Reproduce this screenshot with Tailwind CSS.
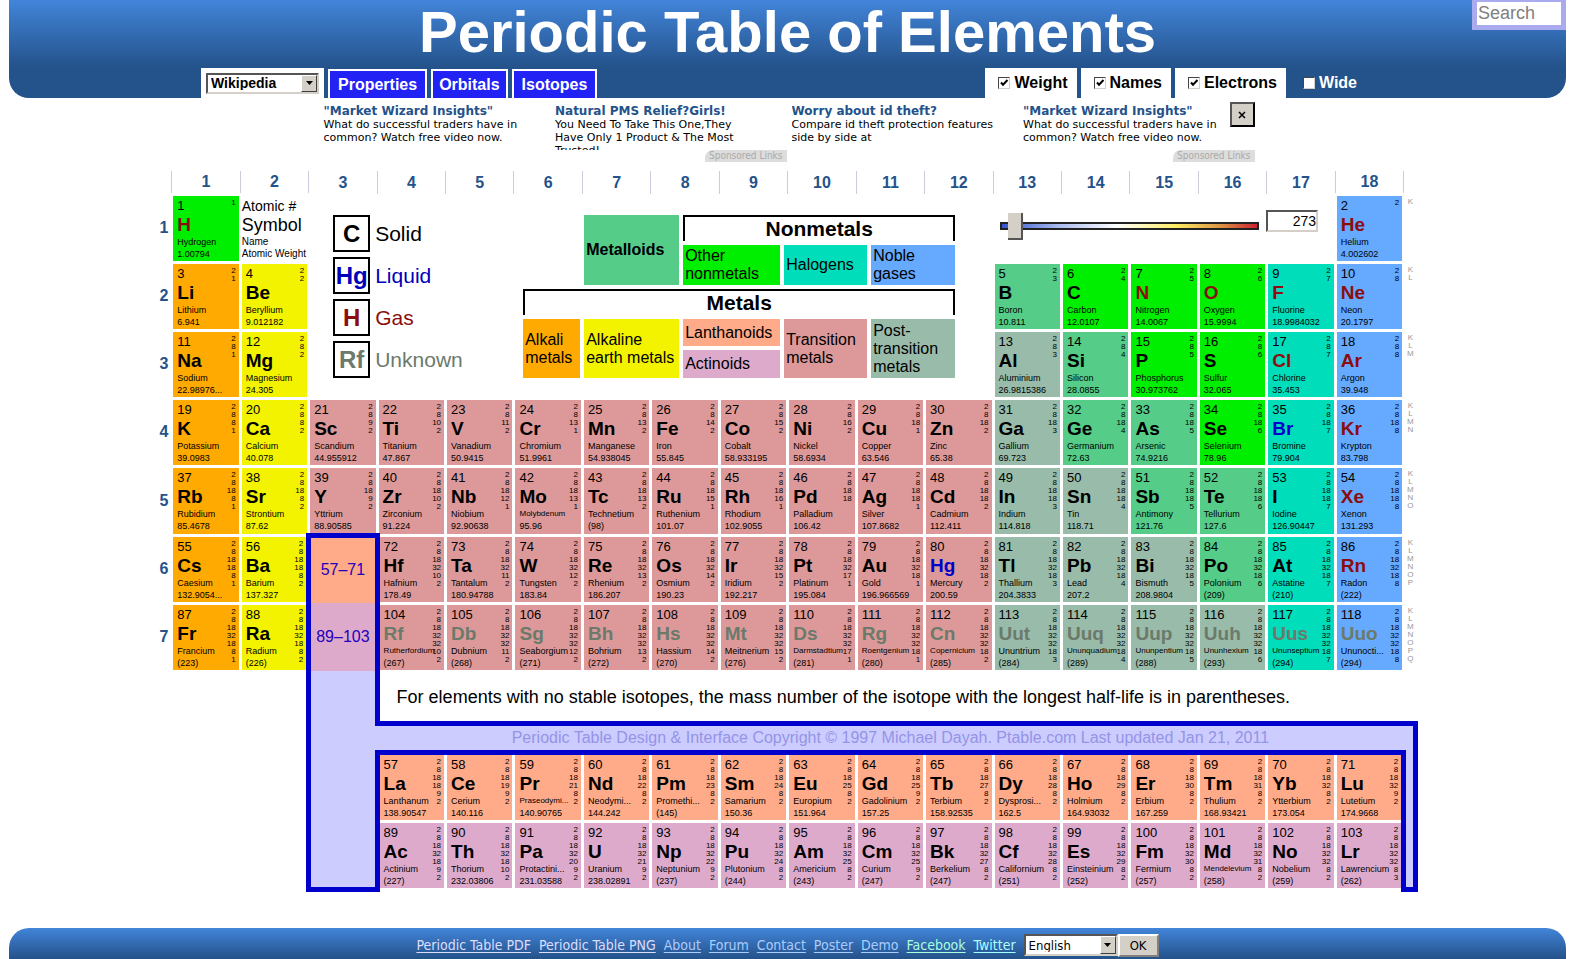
<!DOCTYPE html>
<html lang="en">
<head>
  <meta charset="UTF-8">
  <meta name="viewport" content="width=device-width, initial-scale=1.0">
  <title>Periodic Table of Elements</title>
  <script src="https://cdn.jsdelivr.net/npm/@tailwindcss/browser@4"></script>
</head>
<body class="bg-white text-black font-['Liberation_Sans',Arial,sans-serif]">

  <!-- Header -->
  <header class="relative ml-[9px] mr-3 flex h-[98px] flex-col justify-between rounded-b-[20px] bg-linear-to-b from-[#4285da] to-[#24528a] to-70%">
    <h1 class="pt-px text-center text-[58px] leading-[62px] font-bold whitespace-nowrap text-white">Periodic Table of Elements</h1>
    <input type="search" placeholder="Search" aria-label="Search" class="absolute top-0 right-0 h-[30px] w-[94px] border-[5px] border-t-2 border-[#aaaaee] bg-white px-px text-lg leading-none outline-none placeholder:text-[#808080]">

    <div class="flex items-end justify-between pl-48 pr-[200px] font-bold">
      <nav class="flex items-end gap-1">
        <div class="relative flex h-[30px] w-[123px] items-center bg-white px-[5px]">
          <select aria-label="Source" class="h-[21px] w-full appearance-none border-2 border-[#d4d0c8] border-t-[#555] border-l-[#555] bg-white pl-[3px] text-sm leading-none">
            <option>Wikipedia</option>
          </select>
          <span class="pointer-events-none absolute right-[7px] flex h-[17px] w-4 items-center justify-center border border-t-white border-l-white border-r-[#404040] border-b-[#404040] bg-[#d4d0c8]">
            <svg class="h-1 w-[7px]" viewBox="0 0 7 4"><path d="M0 0h7L3.5 4z"/></svg>
          </span>
        </div>
        <a href="#" class="h-[29px] border-2 border-b-0 border-white bg-[#2222f5] px-2 leading-[27px] text-white">Properties</a>
        <a href="#" class="h-[29px] border-2 border-b-0 border-white bg-[#2222f5] px-1.5 leading-[27px] text-white">Orbitals</a>
        <a href="#" class="h-[29px] border-2 border-b-0 border-white bg-[#2222f5] px-2 leading-[27px] text-white">Isotopes</a>
      </nav>
      <div class="flex items-end gap-1">
        <label class="flex h-[30px] items-center gap-1 bg-white pl-[13px] pr-[9px]">
          <span class="relative size-3">
            <input type="checkbox" checked class="peer block size-3 appearance-none border border-[#d4d0c8] border-t-[#444] border-l-[#444] bg-white">
            <svg class="pointer-events-none absolute inset-0 hidden size-3 peer-checked:block" viewBox="0 0 12 12"><path d="M3 5.5l2 2.2 4.5-4.7" fill="none" stroke="#000" stroke-width="2"/></svg>
          </span>
          Weight
        </label>
        <label class="flex h-[30px] items-center gap-1 bg-white pl-[13px] pr-[9px]">
          <span class="relative size-3">
            <input type="checkbox" checked class="peer block size-3 appearance-none border border-[#d4d0c8] border-t-[#444] border-l-[#444] bg-white">
            <svg class="pointer-events-none absolute inset-0 hidden size-3 peer-checked:block" viewBox="0 0 12 12"><path d="M3 5.5l2 2.2 4.5-4.7" fill="none" stroke="#000" stroke-width="2"/></svg>
          </span>
          Names
        </label>
        <label class="flex h-[30px] items-center gap-1 bg-white pl-[13px] pr-[9px]">
          <span class="relative size-3">
            <input type="checkbox" checked class="peer block size-3 appearance-none border border-[#d4d0c8] border-t-[#444] border-l-[#444] bg-white">
            <svg class="pointer-events-none absolute inset-0 hidden size-3 peer-checked:block" viewBox="0 0 12 12"><path d="M3 5.5l2 2.2 4.5-4.7" fill="none" stroke="#000" stroke-width="2"/></svg>
          </span>
          Electrons
        </label>
        <label class="flex h-[30px] items-center gap-1 pl-[13px] pr-[9px] text-white">
          <input type="checkbox" class="block size-3 appearance-none border border-[#d4d0c8] border-t-[#444] border-l-[#444] bg-white">
          Wide
        </label>
      </div>
    </div>
  </header>

  <!-- Sponsored links -->
  <aside class="relative mx-auto flex w-[59%] gap-[5px] font-['DejaVu_Sans',Verdana,sans-serif] text-[11px] leading-[13px] whitespace-nowrap">
    <div class="flex flex-1 flex-col">
      <div class="grid h-[52px] grid-cols-2 overflow-hidden pt-[7px]">
        <div>
          <a href="#" class="block text-xs leading-[13px] font-bold text-[#24528a]">"Market Wizard Insights"</a>
          <p>What do successful traders have in<br>common? Watch free video now.</p>
        </div>
        <div>
          <a href="#" class="block text-xs leading-[13px] font-bold text-[#24528a]">Natural PMS Relief?Girls!</a>
          <p>You Need To Take This One,They<br>Have Only 1 Product &amp; The Most<br>Trusted!</p>
        </div>
      </div>
      <span class="h-3 self-end rounded-tl-lg bg-[#dddddd] px-1 font-['DejaVu_Sans_Condensed','DejaVu_Sans',sans-serif] text-[10px] leading-3 text-[#aaaaaa]">Sponsored Links</span>
    </div>
    <div class="flex flex-1 flex-col">
      <div class="grid h-[52px] grid-cols-2 overflow-hidden pt-[7px]">
        <div>
          <a href="#" class="block text-xs leading-[13px] font-bold text-[#24528a]">Worry about id theft?</a>
          <p>Compare id theft protection features<br>side by side at</p>
        </div>
        <div>
          <a href="#" class="block text-xs leading-[13px] font-bold text-[#24528a]">"Market Wizard Insights"</a>
          <p>What do successful traders have in<br>common? Watch free video now.</p>
        </div>
      </div>
      <span class="h-3 self-end rounded-tl-lg bg-[#dddddd] px-1 font-['DejaVu_Sans_Condensed','DejaVu_Sans',sans-serif] text-[10px] leading-3 text-[#aaaaaa]">Sponsored Links</span>
    </div>
    <button aria-label="Close" class="absolute top-1 right-0 flex h-[25px] w-[25px] items-center justify-center border-2 border-black border-t-[#555] border-l-[#555] bg-[#d4d0c8]">
      <svg class="size-2" viewBox="0 0 8 8"><path d="M1 1l6 6M7 1l-6 6" stroke="#000" stroke-width="1.5"/></svg>
    </button>
  </aside>

  <!-- Table -->
  <main class="mx-auto mt-[9px] w-4/5 pr-0.5">
    <table class="w-full table-fixed border-collapse">
      <colgroup>
        <col class="w-[14px]">
        <col span="18">
        <col class="w-3">
      </colgroup>
      <thead>
        <tr id="groups" class="h-[23px]"><td></td></tr>
      </thead>
      <tbody>
        <tr>
          <th class="text-base font-bold text-[#24528a]">1</th>
          <td data-z="1-1"></td>
          <td class="border-[3px] border-white align-top">
            <div class="h-[65px] pt-0.5 whitespace-nowrap">
              <div class="text-sm leading-4">Atomic #</div>
              <div class="text-lg leading-[22px]">Symbol</div>
              <div class="text-[10px] leading-3">Name</div>
              <div class="text-[10px] leading-3">Atomic Weight</div>
            </div>
          </td>
          <td colspan="10" rowspan="3" class="align-top">
            <div class="flex pt-[21px] pl-[23px]">
              <ul class="flex w-[190px] shrink-0 flex-col gap-[5px] text-[21px]">
                <li class="flex items-center gap-[5px]"><b class="flex h-[37px] w-[37px] items-center justify-center border-2 text-2xl">C</b>Solid</li>
                <li class="flex items-center gap-[5px] text-[#0000bb]"><b class="flex h-[37px] w-[37px] items-center justify-center border-2 border-black text-2xl">Hg</b>Liquid</li>
                <li class="flex items-center gap-[5px] text-[#8b0d0d]"><b class="flex h-[37px] w-[37px] items-center justify-center border-2 border-black text-2xl">H</b>Gas</li>
                <li class="flex items-center gap-[5px] text-[#6b7a6b]"><b class="flex h-[37px] w-[37px] items-center justify-center border-2 border-black text-2xl">Rf</b>Unknown</li>
              </ul>
              <div class="grid grid-cols-[57px_95px_97px_83px_84px] grid-rows-[26px_40px_26px_27px_28px] gap-1 text-base leading-[18px]">
                <div class="col-start-2 row-span-2 flex items-center bg-[#55cc88] pl-0.5 font-bold">Metalloids</div>
                <div class="col-span-3 flex items-center justify-center border-2 border-b-0 text-[21px] font-bold">Nonmetals</div>
                <div class="col-start-3 flex items-center bg-[#00ee00] pl-0.5">Other<br>nonmetals</div>
                <div class="flex items-center bg-[#00ddbb] pl-0.5">Halogens</div>
                <div class="flex items-center bg-[#66aaff] pl-0.5">Noble<br>gases</div>
                <div class="col-span-5 flex items-center justify-center border-2 border-b-0 text-[21px] font-bold">Metals</div>
                <div class="row-span-2 flex items-center bg-[#ffaa00] pl-0.5">Alkali<br>metals</div>
                <div class="row-span-2 flex items-center bg-[#f3f300] pl-0.5">Alkaline<br>earth metals</div>
                <div class="flex items-center bg-[#ffaa88] pl-0.5">Lanthanoids</div>
                <div class="row-span-2 flex items-center bg-[#dd9999] pl-0.5">Transition<br>metals</div>
                <div class="row-span-2 flex items-center bg-[#99bbaa] pl-0.5">Post-<br>transition<br>metals</div>
                <div class="col-start-3 row-start-5 flex items-center bg-[#ddaacc] pl-0.5">Actinoids</div>
              </div>
            </div>
          </td>
          <td colspan="5" class="align-top">
            <div class="flex items-end gap-[7px] pt-4 pl-[7px]">
              <input type="range" min="0" max="12000" value="273" aria-label="Temperature" class="mb-0.5 h-2 w-[259px] appearance-none border-2 border-[#222222] bg-[linear-gradient(to_right,#3355cc,#aabbee_22%,#ffffff_45%,#ffee66_68%,#dd9944_85%,#cc2233)] [&::-webkit-slider-thumb]:h-[27px] [&::-webkit-slider-thumb]:w-[15px] [&::-webkit-slider-thumb]:appearance-none [&::-webkit-slider-thumb]:border-r-2 [&::-webkit-slider-thumb]:border-b-2 [&::-webkit-slider-thumb]:border-[#555555] [&::-webkit-slider-thumb]:bg-[#d4d0c8]">
              <input type="text" value="273" aria-label="Kelvin" class="h-[22px] w-[52px] border-2 border-[#d4d0c8] border-t-[#555] border-l-[#555] text-right text-sm leading-none">
            </div>
          </td>
          <td data-z="2-2"></td>
          <td data-shells="1"></td>
        </tr>
        <tr>
          <th class="text-base font-bold text-[#24528a]">2</th>
          <td data-z="3-10"></td>
          <td data-shells="2"></td>
        </tr>
        <tr>
          <th class="text-base font-bold text-[#24528a]">3</th>
          <td data-z="11-18"></td>
          <td data-shells="3"></td>
        </tr>
        <tr>
          <th class="text-base font-bold text-[#24528a]">4</th>
          <td data-z="19-36"></td>
          <td data-shells="4"></td>
        </tr>
        <tr>
          <th class="text-base font-bold text-[#24528a]">5</th>
          <td data-z="37-54"></td>
          <td data-shells="5"></td>
        </tr>
        <tr>
          <th class="text-base font-bold text-[#24528a]">6</th>
          <td data-z="55-56"></td>
          <td class="border-x-[5px] border-t-[5px] border-[#0000cc] bg-[#ffaa88] text-center text-base text-[#2200bb]">57–71</td>
          <td data-z="72-86"></td>
          <td data-shells="6"></td>
        </tr>
        <tr>
          <th class="text-base font-bold text-[#24528a]">7</th>
          <td data-z="87-88"></td>
          <td class="border-x-[5px] border-[#0000cc] bg-[#ddaacc] text-center text-base text-[#2200bb]">89–103</td>
          <td data-z="104-118"></td>
          <td data-shells="7"></td>
        </tr>
        <tr class="h-[52px]">
          <td colspan="3"></td>
          <td class="border-x-[5px] border-[#0000cc] bg-[#ccccff]"></td>
          <td colspan="16" class="pl-[17px] text-lg leading-6 whitespace-nowrap">For elements with no stable isotopes, the mass number of the isotope with the longest half-life is in parentheses.</td>
        </tr>
        <tr class="h-[29px]">
          <td colspan="3"></td>
          <td class="border-l-[5px] border-[#0000cc] bg-[#ccccff]"></td>
          <td colspan="15" class="border-y-[5px] border-[#0000cc] bg-[#ccccff] text-center text-base leading-5 text-[#9494e6]">Periodic Table Design &amp; Interface Copyright © 1997 Michael Dayah. Ptable.com Last updated Jan 21, 2011</td>
          <td class="border-t-[5px] border-r-[5px] border-[#0000cc] bg-[#ccccff]"></td>
        </tr>
        <tr>
          <td colspan="3" rowspan="2"></td>
          <td rowspan="2" class="border-x-[5px] border-b-[5px] border-[#0000cc] bg-[#ccccff]"></td>
          <td data-z="57-71"></td>
          <td rowspan="2" class="border-x-[5px] border-b-[5px] border-[#0000cc] bg-[#ccccff]"></td>
        </tr>
        <tr>
          <td data-z="89-103"></td>
        </tr>
      </tbody>
    </table>
  </main>

  <!-- Footer -->
  <footer class="mt-9 ml-[9px] mr-3 flex h-[31px] items-center justify-center gap-2 rounded-t-[20px] bg-linear-to-b from-[#4285da] to-[#24528a] pt-1 font-['DejaVu_Sans_Condensed','DejaVu_Sans',sans-serif] text-sm text-[#aaccff]">
    <a href="#" class="text-[#ddddff] underline underline-offset-2">Periodic Table PDF</a>
    <a href="#" class="text-[#ddddff] underline underline-offset-2">Periodic Table PNG</a>
    <a href="#" class="underline underline-offset-2">About</a>
    <a href="#" class="underline underline-offset-2">Forum</a>
    <a href="#" class="underline underline-offset-2">Contact</a>
    <a href="#" class="underline underline-offset-2">Poster</a>
    <a href="#" class="underline underline-offset-2">Demo</a>
    <a href="#" class="text-[#aaffdd] underline underline-offset-2">Facebook</a>
    <a href="#" class="text-[#aaffff] underline underline-offset-2">Twitter</a>
    <div class="flex items-center text-black">
      <div class="relative flex w-[94px] items-center">
        <select aria-label="Language" class="h-[22px] w-full appearance-none border-2 border-[#d4d0c8] border-t-[#555] border-l-[#555] bg-white pl-[3px] text-[13px] leading-none">
          <option>English</option>
        </select>
        <span class="pointer-events-none absolute right-0.5 flex h-[18px] w-4 items-center justify-center border border-t-white border-l-white border-r-[#404040] border-b-[#404040] bg-[#d4d0c8]">
          <svg class="h-1 w-[7px]" viewBox="0 0 7 4"><path d="M0 0h7L3.5 4z"/></svg>
        </span>
      </div>
      <button class="h-[23px] w-[41px] border-2 border-[#808080] border-t-white border-l-white bg-[#d4d0c8] text-[13px] leading-none">OK</button>
    </div>
  </footer>

  <script>
  // number|symbol|name|weight|electrons per shell|category
  const data = `1|H|Hydrogen|1.00794|1|other
2|He|Helium|4.002602|2|noble
3|Li|Lithium|6.941|2 1|alkali
4|Be|Beryllium|9.012182|2 2|alkaline
5|B|Boron|10.811|2 3|metalloid
6|C|Carbon|12.0107|2 4|other
7|N|Nitrogen|14.0067|2 5|other
8|O|Oxygen|15.9994|2 6|other
9|F|Fluorine|18.9984032|2 7|halogen
10|Ne|Neon|20.1797|2 8|noble
11|Na|Sodium|22.98976...|2 8 1|alkali
12|Mg|Magnesium|24.305|2 8 2|alkaline
13|Al|Aluminium|26.9815386|2 8 3|post
14|Si|Silicon|28.0855|2 8 4|metalloid
15|P|Phosphorus|30.973762|2 8 5|other
16|S|Sulfur|32.065|2 8 6|other
17|Cl|Chlorine|35.453|2 8 7|halogen
18|Ar|Argon|39.948|2 8 8|noble
19|K|Potassium|39.0983|2 8 8 1|alkali
20|Ca|Calcium|40.078|2 8 8 2|alkaline
21|Sc|Scandium|44.955912|2 8 9 2|transition
22|Ti|Titanium|47.867|2 8 10 2|transition
23|V|Vanadium|50.9415|2 8 11 2|transition
24|Cr|Chromium|51.9961|2 8 13 1|transition
25|Mn|Manganese|54.938045|2 8 13 2|transition
26|Fe|Iron|55.845|2 8 14 2|transition
27|Co|Cobalt|58.933195|2 8 15 2|transition
28|Ni|Nickel|58.6934|2 8 16 2|transition
29|Cu|Copper|63.546|2 8 18 1|transition
30|Zn|Zinc|65.38|2 8 18 2|transition
31|Ga|Gallium|69.723|2 8 18 3|post
32|Ge|Germanium|72.63|2 8 18 4|metalloid
33|As|Arsenic|74.9216|2 8 18 5|metalloid
34|Se|Selenium|78.96|2 8 18 6|other
35|Br|Bromine|79.904|2 8 18 7|halogen
36|Kr|Krypton|83.798|2 8 18 8|noble
37|Rb|Rubidium|85.4678|2 8 18 8 1|alkali
38|Sr|Strontium|87.62|2 8 18 8 2|alkaline
39|Y|Yttrium|88.90585|2 8 18 9 2|transition
40|Zr|Zirconium|91.224|2 8 18 10 2|transition
41|Nb|Niobium|92.90638|2 8 18 12 1|transition
42|Mo|Molybdenum|95.96|2 8 18 13 1|transition
43|Tc|Technetium|(98)|2 8 18 13 2|transition
44|Ru|Ruthenium|101.07|2 8 18 15 1|transition
45|Rh|Rhodium|102.9055|2 8 18 16 1|transition
46|Pd|Palladium|106.42|2 8 18 18|transition
47|Ag|Silver|107.8682|2 8 18 18 1|transition
48|Cd|Cadmium|112.411|2 8 18 18 2|transition
49|In|Indium|114.818|2 8 18 18 3|post
50|Sn|Tin|118.71|2 8 18 18 4|post
51|Sb|Antimony|121.76|2 8 18 18 5|metalloid
52|Te|Tellurium|127.6|2 8 18 18 6|metalloid
53|I|Iodine|126.90447|2 8 18 18 7|halogen
54|Xe|Xenon|131.293|2 8 18 18 8|noble
55|Cs|Caesium|132.9054...|2 8 18 18 8 1|alkali
56|Ba|Barium|137.327|2 8 18 18 8 2|alkaline
57|La|Lanthanum|138.90547|2 8 18 18 9 2|lanthanoid
58|Ce|Cerium|140.116|2 8 18 19 9 2|lanthanoid
59|Pr|Praseodymi...|140.90765|2 8 18 21 8 2|lanthanoid
60|Nd|Neodymi...|144.242|2 8 18 22 8 2|lanthanoid
61|Pm|Promethi...|(145)|2 8 18 23 8 2|lanthanoid
62|Sm|Samarium|150.36|2 8 18 24 8 2|lanthanoid
63|Eu|Europium|151.964|2 8 18 25 8 2|lanthanoid
64|Gd|Gadolinium|157.25|2 8 18 25 9 2|lanthanoid
65|Tb|Terbium|158.92535|2 8 18 27 8 2|lanthanoid
66|Dy|Dysprosi...|162.5|2 8 18 28 8 2|lanthanoid
67|Ho|Holmium|164.93032|2 8 18 29 8 2|lanthanoid
68|Er|Erbium|167.259|2 8 18 30 8 2|lanthanoid
69|Tm|Thulium|168.93421|2 8 18 31 8 2|lanthanoid
70|Yb|Ytterbium|173.054|2 8 18 32 8 2|lanthanoid
71|Lu|Lutetium|174.9668|2 8 18 32 9 2|lanthanoid
72|Hf|Hafnium|178.49|2 8 18 32 10 2|transition
73|Ta|Tantalum|180.94788|2 8 18 32 11 2|transition
74|W|Tungsten|183.84|2 8 18 32 12 2|transition
75|Re|Rhenium|186.207|2 8 18 32 13 2|transition
76|Os|Osmium|190.23|2 8 18 32 14 2|transition
77|Ir|Iridium|192.217|2 8 18 32 15 2|transition
78|Pt|Platinum|195.084|2 8 18 32 17 1|transition
79|Au|Gold|196.966569|2 8 18 32 18 1|transition
80|Hg|Mercury|200.59|2 8 18 32 18 2|transition
81|Tl|Thallium|204.3833|2 8 18 32 18 3|post
82|Pb|Lead|207.2|2 8 18 32 18 4|post
83|Bi|Bismuth|208.9804|2 8 18 32 18 5|post
84|Po|Polonium|(209)|2 8 18 32 18 6|metalloid
85|At|Astatine|(210)|2 8 18 32 18 7|halogen
86|Rn|Radon|(222)|2 8 18 32 18 8|noble
87|Fr|Francium|(223)|2 8 18 32 18 8 1|alkali
88|Ra|Radium|(226)|2 8 18 32 18 8 2|alkaline
89|Ac|Actinium|(227)|2 8 18 32 18 9 2|actinoid
90|Th|Thorium|232.03806|2 8 18 32 18 10 2|actinoid
91|Pa|Protactini...|231.03588|2 8 18 32 20 9 2|actinoid
92|U|Uranium|238.02891|2 8 18 32 21 9 2|actinoid
93|Np|Neptunium|(237)|2 8 18 32 22 9 2|actinoid
94|Pu|Plutonium|(244)|2 8 18 32 24 8 2|actinoid
95|Am|Americium|(243)|2 8 18 32 25 8 2|actinoid
96|Cm|Curium|(247)|2 8 18 32 25 9 2|actinoid
97|Bk|Berkelium|(247)|2 8 18 32 27 8 2|actinoid
98|Cf|Californium|(251)|2 8 18 32 28 8 2|actinoid
99|Es|Einsteinium|(252)|2 8 18 32 29 8 2|actinoid
100|Fm|Fermium|(257)|2 8 18 32 30 8 2|actinoid
101|Md|Mendelevium|(258)|2 8 18 32 31 8 2|actinoid
102|No|Nobelium|(259)|2 8 18 32 32 8 2|actinoid
103|Lr|Lawrencium|(262)|2 8 18 32 32 8 3|actinoid
104|Rf|Rutherfordium|(267)|2 8 18 32 32 10 2|transition
105|Db|Dubnium|(268)|2 8 18 32 32 11 2|transition
106|Sg|Seaborgium|(271)|2 8 18 32 32 12 2|transition
107|Bh|Bohrium|(272)|2 8 18 32 32 13 2|transition
108|Hs|Hassium|(270)|2 8 18 32 32 14 2|transition
109|Mt|Meitnerium|(276)|2 8 18 32 32 15 2|transition
110|Ds|Darmstadtium|(281)|2 8 18 32 32 17 1|transition
111|Rg|Roentgenium|(280)|2 8 18 32 32 18 1|transition
112|Cn|Copernicium|(285)|2 8 18 32 32 18 2|transition
113|Uut|Ununtrium|(284)|2 8 18 32 32 18 3|post
114|Uuq|Ununquadium|(289)|2 8 18 32 32 18 4|post
115|Uup|Ununpentium|(288)|2 8 18 32 32 18 5|post
116|Uuh|Ununhexium|(293)|2 8 18 32 32 18 6|post
117|Uus|Ununseptium|(294)|2 8 18 32 32 18 7|halogen
118|Uuo|Ununocti...|(294)|2 8 18 32 32 18 8|noble`;

  const elements = data.split('\n').map(line => line.split('|'));

  const colors = {
    alkali: 'bg-[#ffaa00]',
    alkaline: 'bg-[#f3f300]',
    lanthanoid: 'bg-[#ffaa88]',
    actinoid: 'bg-[#ddaacc]',
    transition: 'bg-[#dd9999]',
    post: 'bg-[#99bbaa]',
    metalloid: 'bg-[#55cc88]',
    other: 'bg-[#00ee00]',
    halogen: 'bg-[#00ddbb]',
    noble: 'bg-[#66aaff]',
  };

  const gases = ['H', 'He', 'N', 'O', 'F', 'Ne', 'Cl', 'Ar', 'Kr', 'Xe', 'Rn'];
  const liquids = ['Br', 'Hg'];

  // names too long for the normal size
  const longNames = [42, 59, 101, 104, 110, 111, 112, 114, 115, 116, 117];

  function stateColor(z, symbol) {
    if (gases.includes(symbol)) return 'text-[#8b0d0d]';
    if (liquids.includes(symbol)) return 'text-[#0000cc]';
    if (z >= 104) return 'text-[#6b7a6b]';
    return 'text-black';
  }

  function cell([z, symbol, name, weight, shells, category]) {
    const nameSize = longNames.includes(Number(z)) ? 'text-[8px]' : 'text-[9px]';
    return `<td class="border-[3px] border-white ${colors[category]}">
      <div class="flex h-[65px] justify-between pt-0.5 pr-[3px] pl-1 whitespace-nowrap">
        <div class="w-0">
          <div class="text-[13px] leading-4">${z}</div>
          <div class="text-[19px] leading-[22px] font-bold ${stateColor(z, symbol)}">${symbol}</div>
          <div class="${nameSize} leading-3">${name}</div>
          <div class="text-[9px] leading-3">${weight}</div>
        </div>
        <div class="pt-px text-right text-[8px] leading-2">${shells.split(' ').join('<br>')}</div>
      </div>
    </td>`;
  }

  for (let g = 1; g <= 18; g++) {
    document.getElementById('groups').insertAdjacentHTML('beforeend',
      `<th class="border-x border-[#ccccdd] text-base leading-5 font-bold text-[#24528a]">${g}</th>`);
  }
  document.getElementById('groups').insertAdjacentHTML('beforeend', '<td></td>');

  document.querySelectorAll('[data-z]').forEach(td => {
    const [from, to] = td.dataset.z.split('-').map(Number);
    td.outerHTML = elements.slice(from - 1, to).map(cell).join('');
  });

  document.querySelectorAll('[data-shells]').forEach(td => {
    const letters = 'KLMNOPQ'.slice(0, td.dataset.shells).split('').join('<br>');
    td.outerHTML = `<td class="pt-1 text-center align-top text-[8px] leading-2 text-[#999999]">${letters}</td>`;
  });
  </script>
</body>
</html>
